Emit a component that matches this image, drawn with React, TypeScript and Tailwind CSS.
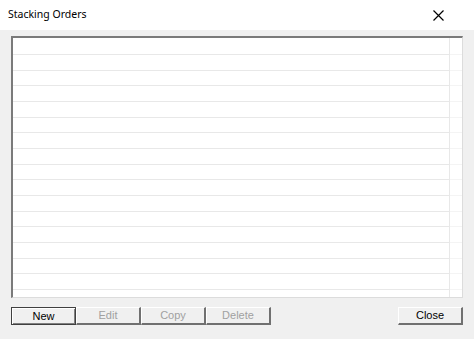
import React from 'react';

const rows = Array.from({ length: 17 });

const Btn: React.FC<{ label: string; disabled?: boolean; focused?: boolean }> = ({ label, disabled, focused }) => (
  <button
    type="button"
    disabled={disabled}
    className={`h-[18px] w-[65px] text-[11px] leading-none flex items-center justify-center bg-[#f0f0f0] ${
      focused
        ? 'border border-[#404040] shadow-[inset_1px_1px_0_#ffffff,inset_-1px_-1px_0_#808080]'
        : 'border-t border-l border-t-white border-l-white border-r-2 border-b-2 border-r-[#707070] border-b-[#707070]'
    } ${disabled ? 'text-[#a0a0a0]' : 'text-black'}`}
    style={{ fontFamily: '"Liberation Sans", Arial, sans-serif' }}
  >
    {label}
  </button>
);

export default function App() {
  return (
    <div className="w-[474px] h-[339px] flex flex-col bg-[#f0f0f0] overflow-hidden" style={{ fontFamily: '"Noto Sans", "Open Sans", sans-serif' }}>
      {/* title bar */}
      <div className="h-[30px] bg-white flex items-center justify-between pl-[8px] pr-[30px] shrink-0">
        <span className="text-[10.5px] text-black">Stacking Orders</span>
        <svg width="11" height="11" viewBox="0 0 11 11" className="text-black">
          <path d="M0.5 0.5L10.5 10.5M10.5 0.5L0.5 10.5" stroke="currentColor" strokeWidth="1.2" />
        </svg>
      </div>

      {/* list */}
      <div className="mt-[6px] ml-[11px] w-[452px] h-[262px] border-t-2 border-l-2 border-t-[#7a7a7a] border-l-[#7a7a7a] border-r border-b border-r-[#dcdcdc] border-b-[#dcdcdc] bg-white flex overflow-hidden">
        <div className="flex-1 flex flex-col pt-[16px]">
          {rows.map((_, i) => (
            <div key={i} className="h-[15.67px] shrink-0 border-t border-[#e8e8e8]" />
          ))}
        </div>
        <div className="w-[13px] border-l border-[#e8e8e8] flex flex-col pt-[16px]">
          {rows.map((_, i) => (
            <div key={i} className="h-[15.67px] shrink-0 border-t border-[#f4f4f4]" />
          ))}
        </div>
      </div>

      {/* buttons */}
      <div className="mt-[9px] ml-[11px] w-[452px] flex justify-between">
        <div className="flex">
          <Btn label="New" focused />
          <Btn label="Edit" disabled />
          <Btn label="Copy" disabled />
          <Btn label="Delete" disabled />
        </div>
        <Btn label="Close" />
      </div>
    </div>
  );
}
